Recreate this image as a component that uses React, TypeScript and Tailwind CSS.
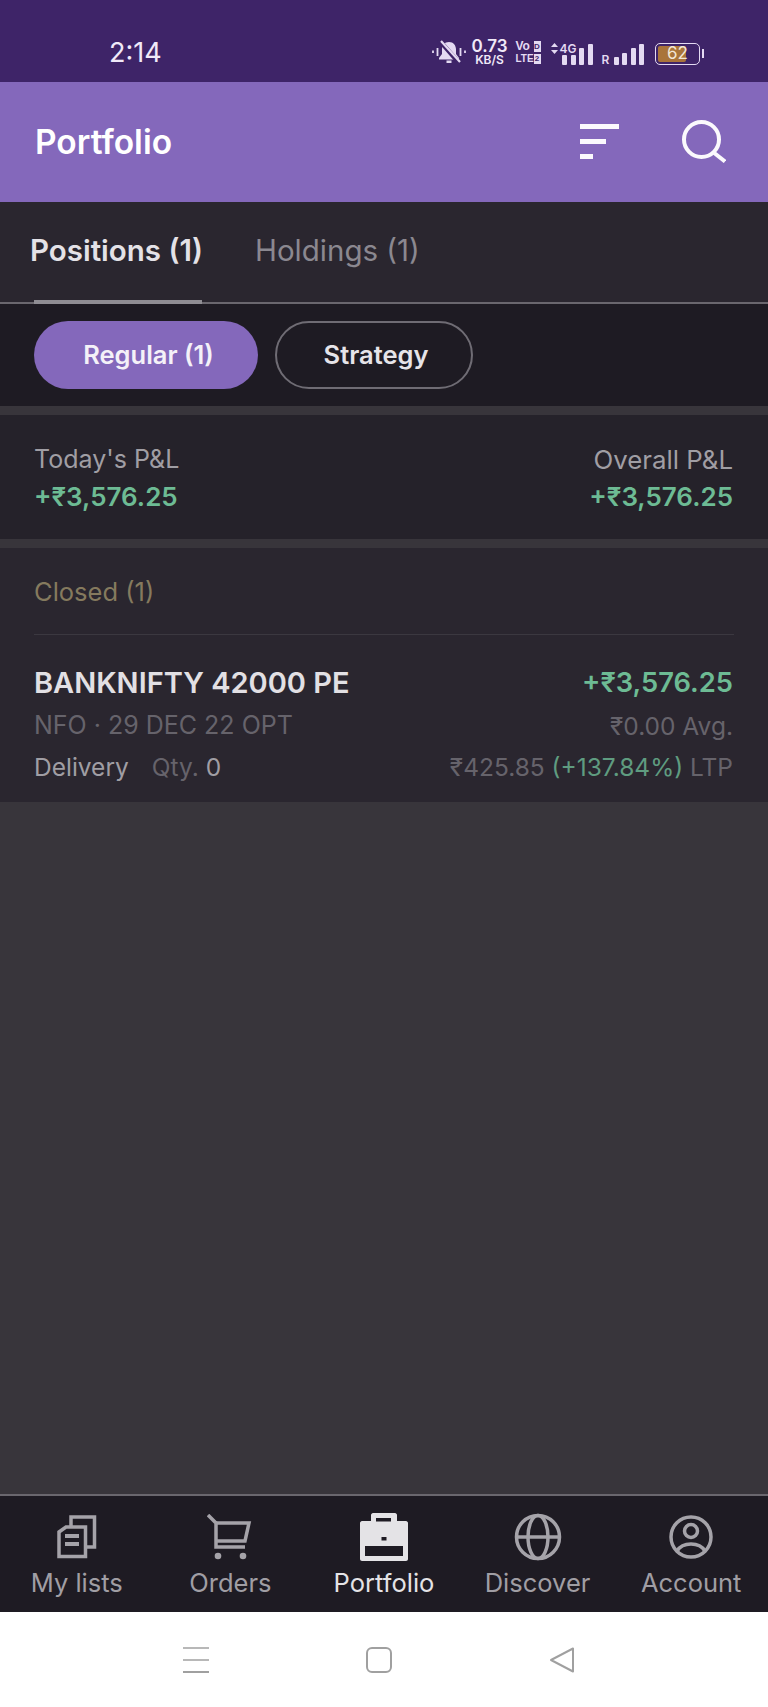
import React from "react";

const lav = "#e4daf2";

const BellOff = () => (
  <svg width="34" height="24" viewBox="0 0 34 24" fill="none" className="block">
    <path d="M17 2c-4.500 0-7 3.500-7 7.500V14l-3 4v1.500h20V18l-3-4V9.500C24 5.500 21.500 2 17 2z" fill={lav} />
    <rect x="14.500" y="20.500" width="5" height="2.500" fill={lav} />
    <path d="M7 0l21 24" stroke="#3e2468" strokeWidth="4.500" />
    <path d="M9 1l19 21" stroke={lav} strokeWidth="2.200" />
    <path d="M1 10.500v2.500M5.500 8v8M28.500 8v8M33 10.500v2.500" stroke={lav} strokeWidth="1.800" />
  </svg>
);

const Bars = ({ heights }: { heights: number[] }) => (
  <div className="flex items-end gap-[3.500px] h-[21px]">
    {heights.map((h, i) => (
      <div key={i} className="w-[5px] bg-[#e4daf2] rounded-[1px]" style={{ height: h }} />
    ))}
  </div>
);

const StatusBar = () => (
  <div className="h-[82px] shrink-0 bg-[#3e2468] flex items-center pt-[22px] pl-[109px] pr-[64px] text-[#f0e9f8]">
    <span className="text-[27px] leading-none font-normal">2:14</span>
    <div className="ml-auto flex items-center h-[25px]">
      <BellOff />
      <div className="ml-[7px] w-[34px] flex flex-col items-center font-semibold">
        <span className="text-[17px] leading-[14px]">0.73</span>
        <span className="text-[12px] leading-[11px] mt-[1px]">KB/S</span>
      </div>
      <div className="ml-[9px] w-[25px] flex flex-col font-bold text-[#e4daf2]" style={{ fontFamily: "'Liberation Sans', sans-serif" }}>
        <div className="flex justify-between items-center h-[12px] text-[12px] leading-[12px]">
          <span>Vo</span>
          <span className="w-[7px] h-[11px] bg-[#e4daf2] text-[#3e2468] text-[8px] leading-[11px] text-center">D</span>
        </div>
        <div className="flex justify-between items-center h-[11px] mt-[1px] text-[10px] leading-[11px]">
          <span>LTE</span>
          <span className="w-[7px] h-[10px] bg-[#e4daf2] text-[#3e2468] text-[8px] leading-[10px] text-center">2</span>
        </div>
      </div>
      <div className="ml-[10px] w-[42px] h-[22px] relative self-end">
        <svg width="7" height="11" viewBox="0 0 7 11" className="absolute left-0 top-0" fill={lav}>
          <path d="M3.500 0L7 4H0zM3.500 11L0 7h7z" />
        </svg>
        <div className="absolute right-0 bottom-0">
          <Bars heights={[10, 10, 17, 21]} />
        </div>
        <span className="absolute left-[9px] top-0 text-[12px] font-semibold leading-[11px] text-[#e4daf2]">4G</span>
      </div>
      <span className="ml-[9px] w-[7px] self-end text-[12px] font-semibold leading-[11px] text-[#e4daf2]">R</span>
      <div className="ml-[5px] self-end">
        <Bars heights={[8, 12, 17, 21]} />
      </div>
      <div className="ml-[11px] w-[45px] h-[22px] self-end rounded-[5px] border-[1.500px] border-[#e4daf2] p-[2px] relative">
        <div className="h-full w-[28px] bg-[#a9743a] rounded-[2px]" />
        <span className="absolute left-[11px] top-0 text-[17px] leading-[19px] text-[#f3e7d6]">62</span>
      </div>
      <div className="ml-[2px] mt-[3px] w-[2px] h-[9px] bg-[#e4daf2]" />
    </div>
  </div>
);

const Header = () => (
  <div className="h-[120px] shrink-0 bg-[#8468bb] flex items-center pl-[35px] pr-[42px] pb-[1px]">
    <h1 className="text-[33.500px] font-semibold text-white leading-none mt-[3px]">Portfolio</h1>
    <div className="ml-auto flex flex-col gap-[10px] w-[39px]">
      <div className="h-[5px] w-[39px] bg-[#fbf9fd]" />
      <div className="h-[5px] w-[26px] bg-[#fbf9fd]" />
      <div className="h-[5px] w-[13px] bg-[#fbf9fd]" />
    </div>
    <svg width="44" height="43" viewBox="0 0 44 43" fill="none" className="ml-[63px]">
      <circle cx="19.500" cy="19.500" r="17.500" stroke="#fbf9fd" strokeWidth="4" />
      <path d="M31 32l12 9.500" stroke="#fbf9fd" strokeWidth="4" />
    </svg>
  </div>
);

const Tabs = () => (
  <div className="h-[102px] shrink-0 bg-[#2a262f] flex border-b-2 border-[#6a676e] pl-[30px]">
    <div className="relative w-[174px] flex items-center">
      <span className="text-[29.500px] font-semibold text-[#e4e2e7] whitespace-nowrap -mt-[4px]">Positions (1)</span>
      <div className="absolute left-[4px] -bottom-[2px] w-[168px] h-[4px] bg-[#8f8d93]" />
    </div>
    <div className="ml-[51px] flex items-center">
      <span className="text-[29.500px] font-normal text-[#8b8890] whitespace-nowrap -mt-[4px]">Holdings (1)</span>
    </div>
  </div>
);

const Chips = () => (
  <div className="h-[102px] shrink-0 bg-[#1e1b23] flex items-center pl-[34px] gap-[17px]">
    <div className="w-[224px] h-[68px] rounded-full bg-[#8468bb] flex items-center justify-center pl-[5px] text-[25.500px] font-semibold text-[#f4f1f8]">
      Regular (1)
    </div>
    <div className="w-[198px] h-[68px] rounded-full border-2 border-[#6f6c74] flex items-center justify-center pl-[4px] text-[25.500px] font-semibold text-[#e6e4e9]">
      Strategy
    </div>
  </div>
);

const Pnl = () => (
  <div className="h-[124px] shrink-0 mt-[9px] bg-[#25222a] flex justify-between pl-[34px] pr-[35px] pt-[28px]">
    <div className="flex flex-col gap-[3px]">
      <span className="text-[25px] leading-[33px] text-[#a09ea4]">Today's P&amp;L</span>
      <span className="text-[26px] leading-[35px] font-semibold text-[#6dbb94]">+₹3,576.25</span>
    </div>
    <div className="flex flex-col items-end gap-[3px]">
      <span className="text-[25.800px] leading-[33px] text-[#a09ea4]">Overall P&amp;L</span>
      <span className="text-[26px] leading-[35px] font-semibold text-[#6dbb94]">+₹3,576.25</span>
    </div>
  </div>
);

const Closed = () => (
  <div className="h-[254px] shrink-0 mt-[9px] bg-[#2a262f] px-[34px]">
    <div className="h-[87px] border-b border-[#3b3840] flex items-center pt-[3px]">
      <span className="text-[25.500px] text-[#857a5e]">Closed (1)</span>
    </div>
    <div className="flex justify-between mt-[31px] items-center h-[34px] pr-[1px]">
      <span className="text-[29px] font-semibold text-[#e2e0e4]">BANKNIFTY 42000 PE</span>
      <span className="text-[27.300px] font-semibold text-[#6dbb94]">+₹3,576.25</span>
    </div>
    <div className="flex justify-between mt-[9px] items-center h-[34px] text-[25px] text-[#66636b] pr-[1px]">
      <span>NFO · 29 DEC 22 OPT</span>
      <span className="text-[24.500px]">₹0.00 Avg.</span>
    </div>
    <div className="flex justify-between mt-[7px] items-center h-[34px] text-[24.500px] text-[#66636b] pr-[1px]">
      <span>
        <span className="text-[#a09ea4]">Delivery</span>
        <span className="ml-[23px]">Qty. </span>
        <span className="text-[#a09ea4]">0</span>
      </span>
      <span>
        ₹425.85 <span className="text-[#5f9c80]">(+137.84%)</span> LTP
      </span>
    </div>
  </div>
);

const gray = "#a5a3a9";

const ListsIcon = () => (
  <svg width="40" height="44" viewBox="0 0 40 44" fill="none" stroke={gray} strokeWidth="3.500">
    <path d="M14 11V2h23.500v30H30" />
    <path d="M2 17l7-5h19.500v29.500H2z" />
    <path d="M8 21h14M8 29h14" strokeWidth="4" />
  </svg>
);

const CartIcon = () => (
  <svg width="46" height="46" viewBox="0 0 46 46" fill="none" stroke={gray} strokeWidth="3.500">
    <path d="M1 1l8 8v24h29" />
    <path d="M9 9h33l-4 18H9" />
    <circle cx="11" cy="42" r="3.300" fill={gray} stroke="none" />
    <circle cx="36" cy="42" r="3.300" fill={gray} stroke="none" />
  </svg>
);

const BriefcaseIcon = () => (
  <svg width="48" height="48" viewBox="0 0 48 48" fill="none">
    <path d="M11 8V2c0-1 1-2 2-2h22c1 0 2 1 2 2v6h9c1 0 2 1 2 2v36c0 1-1 2-2 2H2c-1 0-2-1-2-2V10c0-1 1-2 2-2z" fill="#e4e3e6" />
    <rect x="16" y="5" width="15" height="3.500" fill="#1e1b23" />
    <rect x="21.500" y="24" width="5" height="3.500" fill="#1e1b23" />
    <rect x="5" y="33" width="38" height="10" fill="#1e1b23" />
  </svg>
);

const GlobeIcon = () => (
  <svg width="48" height="48" viewBox="0 0 48 48" fill="none" stroke={gray} strokeWidth="3.500">
    <circle cx="24" cy="24" r="21.500" />
    <ellipse cx="24" cy="24" rx="10" ry="21.500" />
    <path d="M3 24h42" />
  </svg>
);

const AccountIcon = () => (
  <svg width="44" height="44" viewBox="0 0 44 44" fill="none" stroke={gray} strokeWidth="3.500">
    <circle cx="22" cy="22" r="20" />
    <circle cx="22" cy="16" r="6.500" />
    <path d="M8 36c3-5 8-7 14-7s11 2 14 7" />
  </svg>
);

const NavItem = ({ icon, label, active }: { icon: React.ReactNode; label: string; active?: boolean }) => (
  <div className="w-[153.600px] flex flex-col items-center">
    <div className="h-[50px] flex items-center justify-center">{icon}</div>
    <span className={`text-[25.500px] leading-[32px] mt-[5px] ${active ? "text-[#e4e3e6]" : "text-[#a09ea4]"}`}>{label}</span>
  </div>
);

const BottomNav = () => (
  <div className="h-[118px] shrink-0 bg-[#1e1b23] border-t-2 border-[#6a676e] flex pt-[16px]">
    <NavItem icon={<ListsIcon />} label="My lists" />
    <NavItem icon={<CartIcon />} label="Orders" />
    <NavItem icon={<BriefcaseIcon />} label="Portfolio" active />
    <NavItem icon={<GlobeIcon />} label="Discover" />
    <NavItem icon={<AccountIcon />} label="Account" />
  </div>
);

const SysNav = () => (
  <div className="flex-1 bg-white flex items-center pl-[183px] gap-[157px]">
    <svg width="26" height="26" viewBox="0 0 26 26" fill="none" stroke="#a0a0a0" strokeWidth="2">
      <path d="M0 1h26" strokeWidth="1.500" />
      <path d="M0 13h26" strokeWidth="1.500" />
      <path d="M0 25h26" />
    </svg>
    <svg width="26" height="26" viewBox="0 0 26 26" fill="none" stroke="#a0a0a0" strokeWidth="2">
      <rect x="1" y="1" width="24" height="24" rx="5" />
    </svg>
    <svg width="26" height="26" viewBox="0 0 26 26" fill="none" stroke="#a0a0a0" strokeWidth="2" strokeLinejoin="round">
      <path d="M24 1.500v23L2 13z" />
    </svg>
  </div>
);

export default function App() {
  return (
    <div
      className="w-[768px] h-[1707px] flex flex-col bg-[#38353b] overflow-hidden"
      style={{ fontFamily: "Inter, 'Noto Sans', sans-serif" }}
    >
      <StatusBar />
      <Header />
      <Tabs />
      <Chips />
      <Pnl />
      <Closed />
      <div className="h-[692px] shrink-0" />
      <BottomNav />
      <SysNav />
    </div>
  );
}
